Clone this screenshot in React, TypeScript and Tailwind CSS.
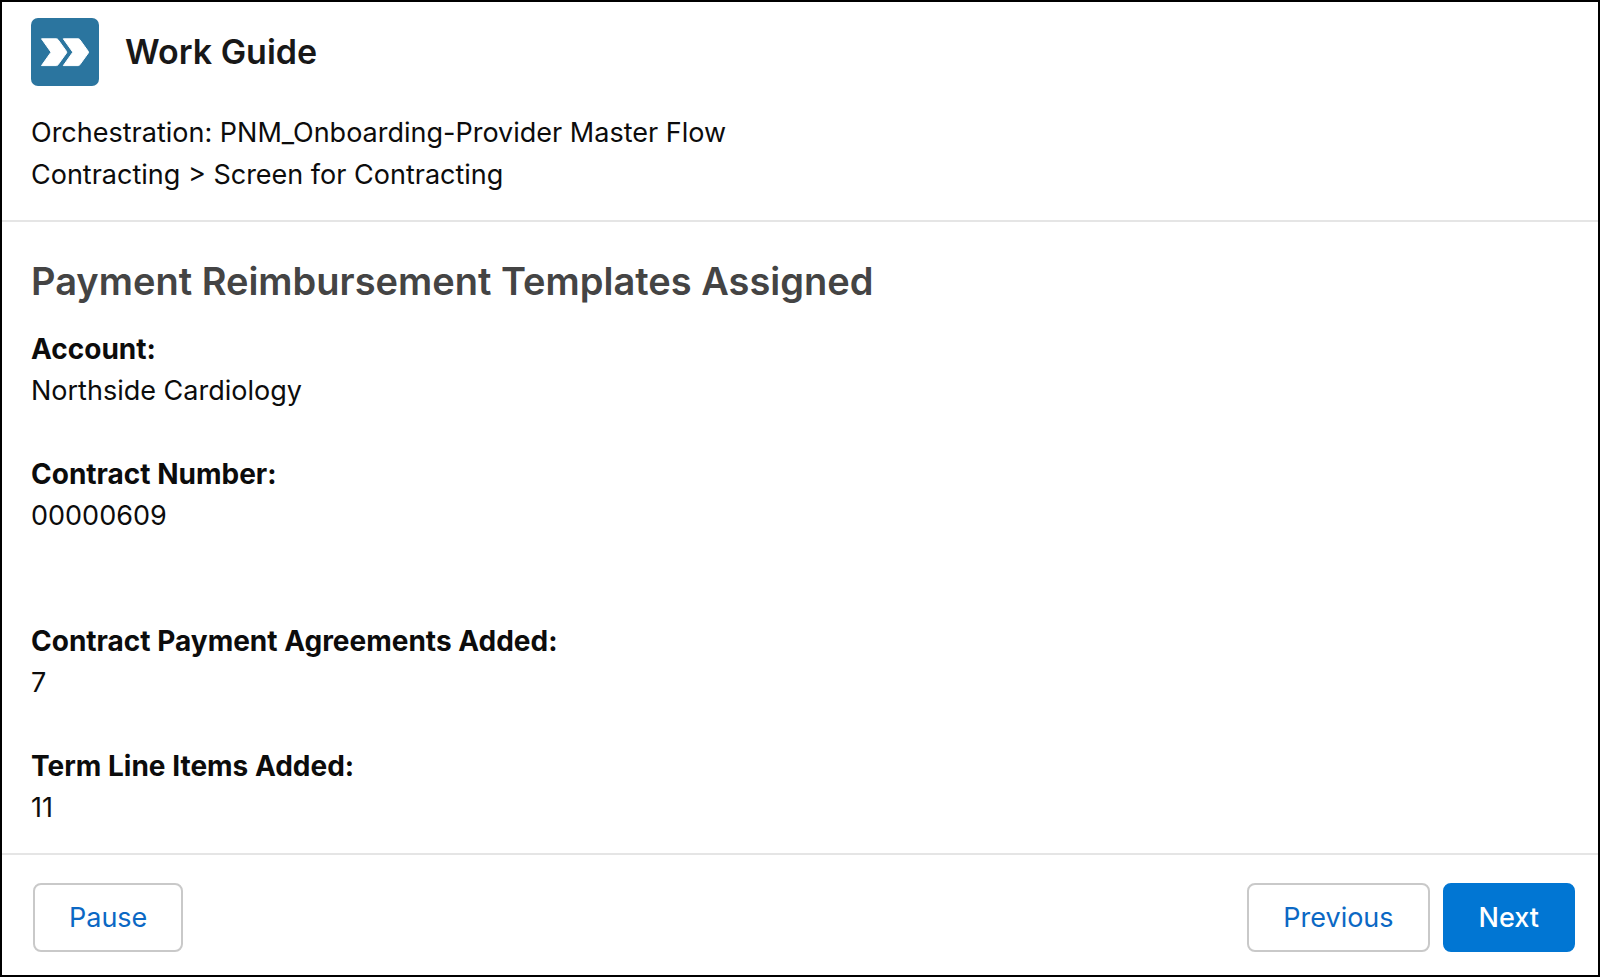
import clsx from 'clsx';

const details = [
  { label: 'Account:', value: 'Northside Cardiology', spacing: 'mb-[41px]' },
  { label: 'Contract Number:', value: '00000609', spacing: 'mb-[83px]' },
  { label: 'Contract Payment Agreements Added:', value: '7', spacing: 'mb-[41px]' },
  { label: 'Term Line Items Added:', value: '11', spacing: '' },
];

const WorkGuideIcon = () => (
  <svg viewBox="0 0 68 68" className="size-[68px] shrink-0" aria-hidden="true">
    <rect width="68" height="68" rx="7" fill="#2b759f" />
    <g fill="#fff" stroke="#fff" strokeWidth="1" strokeLinejoin="round">
      <path d="M10.5 20.8H25.5Q26.4 20.8 27 21.6L35.5 33.4Q36 34.2 35.5 35L27 46.8Q26.4 47.6 25.5 47.6H10.5L20 34.2z" />
      <path d="M32.3 20.8H47.3Q48.2 20.8 48.8 21.6L57.3 33.4Q57.8 34.2 57.3 35L48.8 46.8Q48.2 47.6 47.3 47.6H32.3L41.8 34.2z" />
    </g>
  </svg>
);

type FlowButtonProps = {
  label: string;
  primary?: boolean;
};

const FlowButton = ({ label, primary }: FlowButtonProps) => (
  <button
    type="button"
    className={clsx(
      'h-[69px] rounded-lg border-2 px-[34px]',
      primary
        ? 'border-[#0176d3] bg-[#0176d3] font-medium text-white'
        : 'border-[#c9c9c9] bg-white text-[#0b68c4]',
    )}
  >
    {label}
  </button>
);

const App = () => {
  return (
    <main className="flex min-h-screen flex-col border-2 border-black bg-white font-['Inter','Liberation_Sans',sans-serif] text-[27px] leading-[42px] text-[#0c0c0c]">
      <header className="border-b-2 border-[#e5e5e5] px-[29px] pt-4 pb-6">
        <div className="mb-[26px] flex items-center gap-[26px]">
          <WorkGuideIcon />
          <h1 className="text-[34px] font-semibold text-[#181818]">Work Guide</h1>
        </div>
        <p>Orchestration: PNM_Onboarding-Provider Master Flow</p>
        <p>Contracting &gt; Screen for Contracting</p>
      </header>

      <section className="grow px-[29px] pt-[34px]">
        <h2 className="mb-[22px] text-[38px] leading-[50px] font-semibold text-[#444]">
          Payment Reimbursement Templates Assigned
        </h2>
        <dl>
          {details.map(({ label, value, spacing }) => (
            <div key={label} className={spacing}>
              <dt className="text-[28px] font-bold">{label}</dt>
              <dd>{value}</dd>
            </div>
          ))}
        </dl>
      </section>

      <footer className="flex items-center justify-between border-t-2 border-[#e5e5e5] pt-7 pr-[23px] pb-[23px] pl-[31px]">
        <FlowButton label="Pause" />
        <div className="flex gap-[13px]">
          <FlowButton label="Previous" />
          <FlowButton label="Next" primary />
        </div>
      </footer>
    </main>
  );
};

export default App;
